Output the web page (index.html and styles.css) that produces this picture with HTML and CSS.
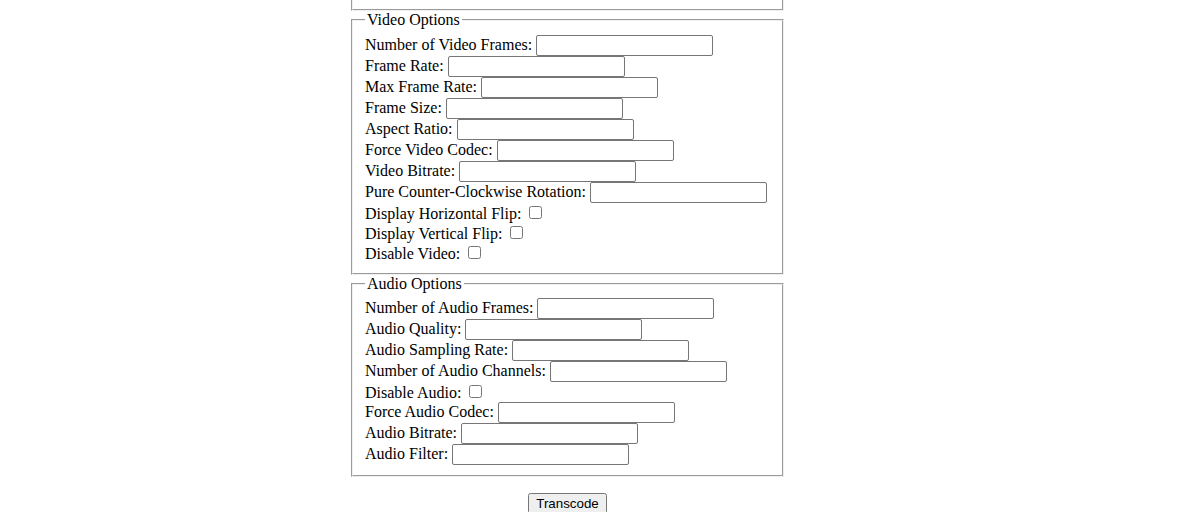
FILE: index.html
```html
<!DOCTYPE html>
<html>
<head>
<meta charset="utf-8">
<title>Transcode</title>
<link rel="stylesheet" href="styles.css">
</head>
<body>
<form class="wrap">
  <fieldset class="prev"></fieldset>
  <fieldset class="group">
    <legend>Video Options</legend>
    <div class="row">Number of Video Frames: <input type="text" class="field"></div>
    <div class="row">Frame Rate: <input type="text" class="field"></div>
    <div class="row">Max Frame Rate: <input type="text" class="field"></div>
    <div class="row">Frame Size: <input type="text" class="field"></div>
    <div class="row">Aspect Ratio: <input type="text" class="field"></div>
    <div class="row">Force Video Codec: <input type="text" class="field"></div>
    <div class="row">Video Bitrate: <input type="text" class="field"></div>
    <div class="row">Pure Counter-Clockwise Rotation: <input type="text" class="field"></div>
    <div class="row">Display Horizontal Flip: <input type="checkbox"></div>
    <div class="row">Display Vertical Flip: <input type="checkbox"></div>
    <div class="row">Disable Video: <input type="checkbox"></div>
  </fieldset>
  <fieldset class="group">
    <legend>Audio Options</legend>
    <div class="row">Number of Audio Frames: <input type="text" class="field"></div>
    <div class="row">Audio Quality: <input type="text" class="field"></div>
    <div class="row">Audio Sampling Rate: <input type="text" class="field"></div>
    <div class="row">Number of Audio Channels: <input type="text" class="field"></div>
    <div class="row">Disable Audio: <input type="checkbox"></div>
    <div class="row">Force Audio Codec: <input type="text" class="field"></div>
    <div class="row">Audio Bitrate: <input type="text" class="field"></div>
    <div class="row">Audio Filter: <input type="text" class="field"></div>
  </fieldset>
  <p class="actions"><button type="button" class="btn">Transcode</button></p>
</form>
</body>
</html>
```
FILE: styles.css
```css
html, body {
  margin: 0;
  padding: 0;
  background: #fff;
  overflow: hidden;
}
body {
  font-family: "Liberation Serif", "Times New Roman", serif;
  font-size: 16px;
  color: #000;
}
.wrap {
  margin: 0 0 0 349px;
  width: 437px;
}
.prev {
  margin: -13px 2px 0;
  padding: 0;
  height: 20px;
  box-sizing: content-box;
}
.group {
  margin: 0 2px;
}
.group legend {
  line-height: 18px;
}
.field {
  box-sizing: border-box;
  width: 177px;
  height: 21px;
  padding: 1px 2px;
  border: 1px solid #767676;
  border-radius: 2px;
  font-family: "Liberation Sans", Arial, sans-serif;
  font-size: 13.333px;
}
.actions {
  text-align: center;
  margin: 16px 0;
}
.btn {
  font-family: "Liberation Sans", Arial, sans-serif;
  font-size: 13.333px;
}
```
